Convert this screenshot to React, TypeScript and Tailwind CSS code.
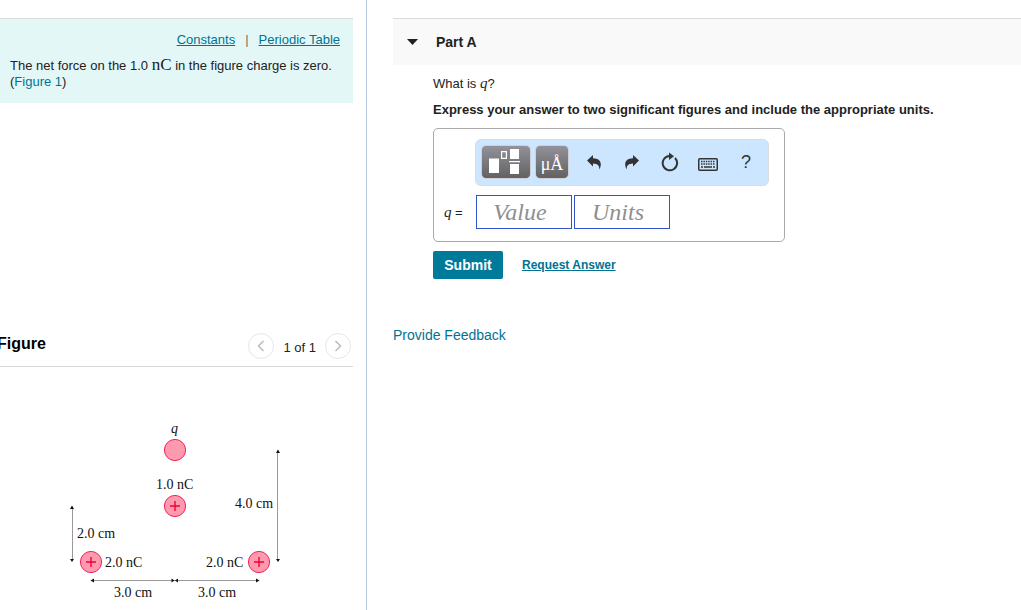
import { useState } from 'react';

const LINK = 'text-[#007394]';

interface ChargeProps {
  x: number;
  y: number;
  positive?: boolean;
}

function Charge({ x, y, positive }: ChargeProps) {
  return (
    <g>
      <circle cx={x} cy={y} r="10.6" fill="#ff99ae" stroke="#f0245c" strokeWidth="1" />
      {positive && (
        <path d={`M${x - 5} ${y}h10M${x} ${y - 5}v10`} stroke="#f0003c" strokeWidth="1.4" />
      )}
    </g>
  );
}

function ChargeFigure() {
  return (
    <svg
      width="353"
      height="243"
      viewBox="0 0 353 243"
      role="img"
      aria-label="Charge diagram"
      className="block font-['Liberation_Serif',serif] text-[14px]"
    >
      <g stroke="#999" strokeWidth="1" fill="none">
        <path d="M72.5 141v52" />
        <path d="M277.5 85v108" />
        <path d="M93 213.5h165" />
      </g>
      <g fill="#111">
        <path d="M72 138.500l2 3.500h-4z" />
        <path d="M72 195l2-3h-4z" />
        <path d="M278 82.500l2 3.500h-4z" />
        <path d="M278 195l2-3h-4z" />
        <path d="M90.500 213.500l3.500-2v4z" />
        <path d="M174.500 213.500l-3-2v4z" />
        <path d="M175 213.500l3-2v4z" />
        <path d="M259.500 213.500l-3.500-2v4z" />
      </g>
      <Charge x={175} y={83} />
      <Charge x={175} y={139} positive />
      <Charge x={91} y={195} positive />
      <Charge x={259} y={195} positive />
      <g fill="#111">
        <text x="171" y="66" fontStyle="italic">q</text>
        <text x="156" y="122">1.0 nC</text>
        <text x="235" y="141">4.0 cm</text>
        <text x="77" y="171">2.0 cm</text>
        <text x="105" y="200">2.0 nC</text>
        <text x="206" y="200">2.0 nC</text>
        <text x="114" y="230">3.0 cm</text>
        <text x="198" y="230">3.0 cm</text>
      </g>
    </svg>
  );
}

function ProblemPanel() {
  return (
    <aside className="w-[367px] shrink-0 overflow-hidden border-r border-[#b5c8dc] pt-[18px] pr-[13px]">
      <section className="border-t border-[#d9dedd] bg-[#e3f7f7] px-[10px] pt-3 pb-[13px] text-[13px] leading-4">
        <nav className="mb-[7px] flex justify-end gap-[10px] pr-[3px] leading-[18px]">
          <a href="#constants" className={`${LINK} underline`}>Constants</a>
          <span className="text-[#7d6f60]">|</span>
          <a href="#periodic-table" className={`${LINK} underline`}>Periodic Table</a>
        </nav>
        <p>
          The net force on the 1.0{' '}
          <span className="font-['Liberation_Serif',serif] text-[17px] leading-none">nC</span> in the
          figure charge is zero.
          <br />(
          <a href="#figure" className={LINK}>Figure 1</a>)
        </p>
      </section>

      <section id="figure" className="mt-[230px]">
        <header className="flex items-start justify-between border-b border-[#d8d8d8] pb-[7px]">
          <h2 className="-ml-[3px] pt-px text-[16px] leading-5 font-bold text-black">Figure</h2>
          <div className="flex items-center gap-[9px] pr-[2px] text-[13px]">
            <button
              type="button"
              aria-label="Previous figure"
              className="flex size-[26px] items-center justify-center rounded-full border border-[#e6e6e6]"
            >
              <svg width="8" height="12" viewBox="0 0 8 12" fill="none" stroke="#bbb" strokeWidth="1.500">
                <path d="M6.500 1l-5 5 5 5" />
              </svg>
            </button>
            <span className="pt-1">1 of 1</span>
            <button
              type="button"
              aria-label="Next figure"
              className="flex size-[26px] items-center justify-center rounded-full border border-[#e6e6e6]"
            >
              <svg width="8" height="12" viewBox="0 0 8 12" fill="none" stroke="#bbb" strokeWidth="1.500">
                <path d="M1.500 1l5 5-5 5" />
              </svg>
            </button>
          </div>
        </header>
        <ChargeFigure />
      </section>
    </aside>
  );
}

function Toolbar() {
  const dark = 'flex h-[34px] items-center justify-center rounded-[5px] border border-[#cfcfd4] bg-linear-to-b from-[#93919a] to-[#626262] text-white';
  const plain = 'flex size-6 items-center justify-center text-[#333]';

  return (
    <div className="ml-[41px] flex h-[47px] items-center rounded-[6px] border border-[#d8dce0] bg-[#cce6ff] pb-px pl-[5px]">
      <button type="button" aria-label="Templates" className={`${dark} w-[50px]`}>
        <svg width="34" height="26" viewBox="0 0 34 26">
          <path d="M0 9.500h10V24H0zM21 0h9v10h-9zM21 15h9v10h-9zM20 12h11v1.200H20z" fill="#fff" />
          <path d="M12.600 2.600h4.800v6.800h-4.800z" fill="none" stroke="#fff" strokeWidth="1.200" />
        </svg>
      </button>
      <button
        type="button"
        aria-label="Symbols"
        className={`${dark} ml-[4px] w-[34px] pt-1 font-['Liberation_Serif',serif] text-[18px] leading-5`}
      >
        μÅ
      </button>
      <div className="ml-[13px] flex items-center gap-[14px]">
        <button type="button" aria-label="Undo" className={plain}>
          <svg width="14" height="15" viewBox="0 0 14 15" fill="currentColor">
            <path d="M0 5.600L6 0v3.200c5.200.1 8 2.500 7.800 6.300-.1 2-.7 3.600-1.500 5 .2-3.800-1.300-6-6.300-6.100v3z" />
          </svg>
        </button>
        <button type="button" aria-label="Redo" className={plain}>
          <svg width="14" height="15" viewBox="0 0 14 15" fill="currentColor">
            <path d="M14 5.600L8 0v3.200C2.800 3.300 0 5.700.2 9.500c.1 2 .7 3.600 1.500 5-.2-3.800 1.300-6 6.300-6.100v3z" />
          </svg>
        </button>
        <button type="button" aria-label="Reset" className={plain}>
          <svg width="18" height="20" viewBox="0 0 18 20" fill="none" stroke="currentColor" strokeWidth="2">
            <path d="M14 6A7.200 7.200 0 1 1 8.500 3.900" />
            <path d="M8 0.500l5 3.700L8 8z" fill="currentColor" stroke="none" />
          </svg>
        </button>
        <button type="button" aria-label="Keyboard" className={`${plain} pt-1`}>
          <svg width="20" height="13" viewBox="0 0 20 13" fill="none" stroke="currentColor">
            <rect x="0.750" y="0.750" width="18.500" height="11.500" rx="1" strokeWidth="1.500" />
            <path d="M3 3.500h14M3 6h14" strokeWidth="1.300" strokeDasharray="1.500 0.900" />
            <path d="M3 9h2M6 9h8M15 9h2" strokeWidth="1.300" />
          </svg>
        </button>
        <button type="button" aria-label="Help" className={`${plain} text-[18px]`}>
          ?
        </button>
      </div>
    </div>
  );
}

function AnswerForm() {
  const [value, setValue] = useState('');
  const [units, setUnits] = useState('');
  const field = "h-[34px] w-24 border border-[#3355cc] bg-white pr-2 text-center font-['Liberation_Serif',serif] text-[24px] italic placeholder:text-[#8f8f8f] focus:outline-none";

  return (
    <form onSubmit={(e) => e.preventDefault()}>
      <div className="w-[352px] max-w-full rounded-[5px] border border-[#aaa] pt-[10px] pr-[15px] pb-3">
        <Toolbar />
        <div className="mt-[9px] flex items-center">
          <label htmlFor="value" className="w-[42px] pl-[10px] text-[13px]">
            <span className="font-['Liberation_Serif',serif] text-[15px] italic">q</span> =
          </label>
          <input
            id="value"
            value={value}
            onChange={(e) => setValue(e.target.value)}
            placeholder="Value"
            className={field}
          />
          <input
            aria-label="Units"
            value={units}
            onChange={(e) => setUnits(e.target.value)}
            placeholder="Units"
            className={`${field} ml-[2px]`}
          />
        </div>
      </div>
      <div className="mt-[9px] flex items-center gap-[19px]">
        <button
          type="submit"
          className="h-7 w-[70px] rounded-[2px] bg-[#007a99] text-[14px] font-bold text-white"
        >
          Submit
        </button>
        <a href="#answer" className={`${LINK} text-[12px] leading-4 font-bold underline`}>
          Request Answer
        </a>
      </div>
    </form>
  );
}

export default function App() {
  const [open, setOpen] = useState(true);

  return (
    <div className="flex min-h-screen bg-white font-['Liberation_Sans',Arial,sans-serif] text-[#222]">
      <ProblemPanel />
      <main className="min-w-0 flex-1 pt-[18px] pl-[26px]">
        <button
          type="button"
          aria-expanded={open}
          onClick={() => setOpen(!open)}
          className="flex h-[47px] w-full items-center border-t border-[#dcdcdc] bg-[#f9f9f9] pl-[14px] text-left text-[14px] font-bold"
        >
          <svg width="11" height="6" viewBox="0 0 11 6" className="mr-[18px]">
            <path d="M0 0h11L5.500 6z" fill="#222" />
          </svg>
          Part A
        </button>
        {open && (
          <div className="pt-[11px] pl-10 text-[13px] leading-4">
            <p>
              What is{' '}
              <span className="font-['Liberation_Serif',serif] text-[15px] leading-none italic">q</span>?
            </p>
            <p className="my-[10px] font-bold">
              Express your answer to two significant figures and include the appropriate units.
            </p>
            <AnswerForm />
          </div>
        )}
        <a href="#feedback" className={`${LINK} mt-[46px] inline-block text-[14px] leading-5`}>
          Provide Feedback
        </a>
      </main>
    </div>
  );
}
